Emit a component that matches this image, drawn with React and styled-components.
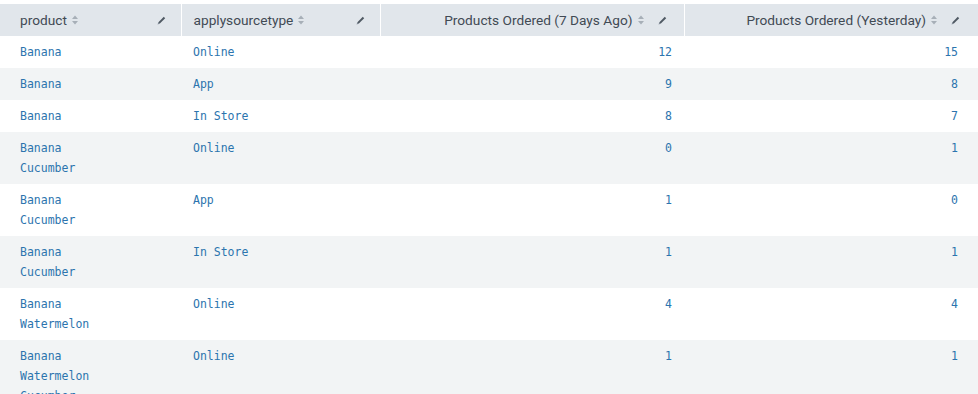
import React from "react";
import styled, { createGlobalStyle } from "styled-components";

const Global = createGlobalStyle`
  html, body { margin: 0; padding: 0; background: #ffffff; }
  body { overflow: hidden; }
`;

const Wrap = styled.div`
  width: 978px;
  height: 394px;
  padding-top: 4px;
  box-sizing: border-box;
  overflow: hidden;
  background: #fff;
`;

const Table = styled.table`
  width: 978px;
  border-collapse: collapse;
  table-layout: fixed;
`;

const Th = styled.th`
  height: 32px;
  padding: 0;
  background: #e1e6eb;
  border-left: ${(p) => (p.$first ? "none" : "1px solid #ffffff")};
  font-family: Roboto, "Liberation Sans", sans-serif;
  font-size: 13.7px;
  font-weight: 400;
  color: #414a54;
  box-sizing: border-box;
`;

const HeadInner = styled.div`
  display: flex;
  align-items: center;
  height: 32px;
  padding-left: ${(p) => p.$pl}px;
  padding-right: ${(p) => p.$pr}px;
  justify-content: ${(p) => (p.$right ? "flex-end" : "flex-start")};
`;

const Label = styled.span`
  white-space: nowrap;
`;

const SortIcon = styled.svg`
  margin-left: 5px;
  flex: none;
`;

const Pencil = styled.svg`
  flex: none;
  margin-left: ${(p) => (p.$auto ? "auto" : "14px")};
`;

const Row = styled.tr`
  background: ${(p) => (p.$alt ? "#f2f4f5" : "#ffffff")};
`;

const Td = styled.td`
  vertical-align: top;
  padding: 6px ${(p) => p.$pr || 12}px 6px ${(p) => p.$pl || 12}px;
  text-align: ${(p) => (p.$num ? "right" : "left")};
  font-family: "DejaVu Sans Mono", "Liberation Mono", monospace;
  font-size: 11.5px;
  line-height: 20px;
  color: #2c74ae;
  box-sizing: border-box;
`;

const Line = styled.div``;

const Sort = () => (
  <SortIcon width="6" height="10" viewBox="0 0 6 10">
    <path d="M3 0.5 L6 4 L0 4 Z" fill="#a7afb7" />
    <path d="M3 9.5 L6 6 L0 6 Z" fill="#a7afb7" />
  </SortIcon>
);

const Edit = ({ auto }) => (
  <Pencil $auto={auto} width="9" height="9" viewBox="0 0 9 9">
    <path d="M6.8 0.8 L8.2 2.2 L2.6 7.8 L1.2 6.4 Z" fill="#4f5963" />
    <path d="M1.2 6.4 L2.6 7.8 L0.6 8.4 Z" fill="#7d8893" />
  </Pencil>
);

const rows = [
  { p: ["Banana"], s: "Online", a: 12, b: 15 },
  { p: ["Banana"], s: "App", a: 9, b: 8 },
  { p: ["Banana"], s: "In Store", a: 8, b: 7 },
  { p: ["Banana", "Cucumber"], s: "Online", a: 0, b: 1 },
  { p: ["Banana", "Cucumber"], s: "App", a: 1, b: 0 },
  { p: ["Banana", "Cucumber"], s: "In Store", a: 1, b: 1 },
  { p: ["Banana", "Watermelon"], s: "Online", a: 4, b: 4 },
  { p: ["Banana", "Watermelon", "Cucumber"], s: "Online", a: 1, b: 1 },
];

export default function App() {
  return (
    <>
      <Global />
      <Wrap>
        <Table>
          <colgroup>
            <col style={{ width: 181 }} />
            <col style={{ width: 199 }} />
            <col style={{ width: 304 }} />
            <col />
          </colgroup>
          <thead>
            <tr>
              <Th $first>
                <HeadInner $pl={20} $pr={15}>
                  <Label>product</Label>
                  <Sort />
                  <Edit auto />
                </HeadInner>
              </Th>
              <Th>
                <HeadInner $pl={12} $pr={15}>
                  <Label>applysourcetype</Label>
                  <Sort />
                  <Edit auto />
                </HeadInner>
              </Th>
              <Th>
                <HeadInner $pl={12} $pr={17} $right>
                  <Label>Products Ordered (7 Days Ago)</Label>
                  <Sort />
                  <Edit />
                </HeadInner>
              </Th>
              <Th>
                <HeadInner $pl={12} $pr={18} $right>
                  <Label>Products Ordered (Yesterday)</Label>
                  <Sort />
                  <Edit />
                </HeadInner>
              </Th>
            </tr>
          </thead>
          <tbody>
            {rows.map((r, i) => (
              <Row key={i} $alt={i % 2 === 1}>
                <Td $pl={20}>
                  {r.p.map((t) => (
                    <Line key={t}>{t}</Line>
                  ))}
                </Td>
                <Td>{r.s}</Td>
                <Td $num>{r.a}</Td>
                <Td $num $pr={20}>{r.b}</Td>
              </Row>
            ))}
          </tbody>
        </Table>
      </Wrap>
    </>
  );
}
